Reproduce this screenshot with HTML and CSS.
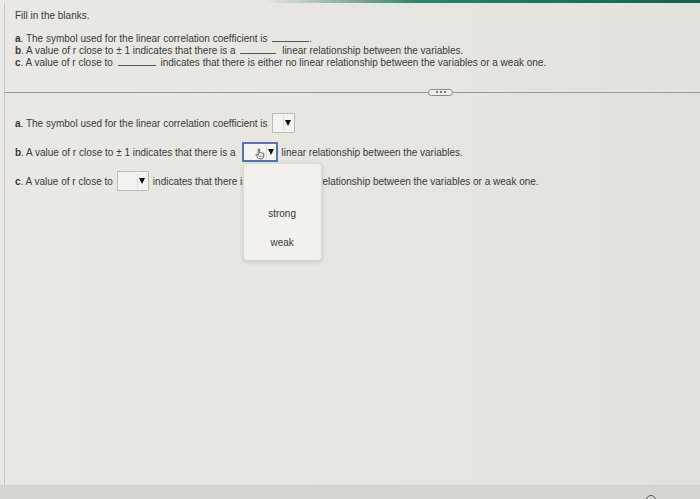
FILE: index.html
```html
<!DOCTYPE html>
<html lang="en">
<head>
    <meta charset="UTF-8">
    <title>Fill in the blanks</title>
    <meta name="viewport" content="width=device-width, initial-scale=1.0">
    <link rel="stylesheet" href="styles.css">
</head>
<body>
    <div class="screen">
        <div class="topbar"></div>

        <div class="frame">
            <!-- question text -->
            <div class="intro">
                <p class="title">Fill in the blanks.</p>
                <div class="questions">
                    <p><b>a</b>. The symbol used for the linear correlation coefficient is <span class="blank blank-a"></span>.</p>
                    <p><b>b</b>. A value of r close to &plusmn; 1 indicates that there is a <span class="blank blank-b"></span> linear relationship between the variables.</p>
                    <p><b>c</b>. A value of r close to <span class="blank blank-c"></span> indicates that there is either no linear relationship between the variables or a weak one.</p>
                </div>
            </div>

            <div class="divider">
                <span class="rule rule-left"></span>
                <span class="more"><i></i><i></i><i></i></span>
                <span class="rule"></span>
            </div>

            <!-- answer area -->
            <div class="answers">
                <div class="answer-row">
                    <span><b>a</b>. The symbol used for the linear correlation coefficient is</span>
                    <span class="select select-a"><span class="arrow"></span></span>
                </div>
                <div class="answer-row">
                    <span><b>b</b>. A value of r close to &plusmn; 1 indicates that there is a</span>
                    <span class="select-wrap">
                        <span class="select select-b focused">
                            <svg class="hand" viewBox="0 0 14 16" width="10" height="12">
                                <path d="M4.5 1.8a1 1 0 0 1 2 0V6.5h.4a1 1 0 0 1 1.8.3 1 1 0 0 1 1.8.4 1 1 0 0 1 1.8.6V11c0 2.2-1.6 3.8-3.8 3.8H6.7c-1.3 0-2.1-.6-2.9-1.700L1.6 9.8a1 1 0 0 1 1.6-1.2l1.3 1.5z" fill="#fff" stroke="#222" stroke-width="1"/>
                                <path d="M6.5 10v2.5M8.3 10v2.5M10.1 10v2.5" stroke="#222" stroke-width=".7"/>
                            </svg>
                            <span class="arrow"></span>
                        </span>
                        <div class="menu">
                            <div class="menu-item">strong</div>
                            <div class="menu-item">weak</div>
                        </div>
                    </span>
                    <span class="after">linear relationship between the variables.</span>
                </div>
                <div class="answer-row">
                    <span><b>c</b>. A value of r close to</span>
                    <span class="select select-c"><span class="arrow"></span></span>
                    <span class="after">indicates that there is either no linear relationship between the variables or a weak one.</span>
                </div>
            </div>
        </div>

        <div class="footer">
            <span class="dot"></span>
        </div>
    </div>
</body>
</html>
```

FILE: styles.css
```css
* {
    box-sizing: border-box;
    margin: 0;
    padding: 0;
}
body {
    font-family: "Liberation Sans", Arial, sans-serif;
    font-size: 10px;
    color: #3a3a3a;
    background-color: #e8e7e2;
}
.screen {
    height: 499px;
    display: flex;
    flex-direction: column;
    background: linear-gradient(to right, #e9e8e4, #e6e5df 60%, #e2e1db);
}
.topbar {
    height: 3px;
    background: linear-gradient(to right, rgba(40, 100, 80, 0) 38%, #3a7a66 60%, #1f5c4c);
}
.frame {
    flex: 1;
    margin-left: 4px;
    border-left: 1px solid #c8c6c1;
}
.intro {
    padding: 7px 0 0 10px;
}
.title {
    line-height: 12px;
}
.questions {
    margin-top: 11px;
}
.questions p {
    line-height: 12px;
    white-space: nowrap;
}
.blank {
    display: inline-block;
    height: 9px;
    border-bottom: 1px solid #555;
    vertical-align: baseline;
}
.blank-a {
    width: 37px;
    margin-left: 2px;
}
.blank-b {
    width: 36px;
    margin: 0 3px 0 2px;
}
.blank-c {
    width: 38px;
    margin: 0 2px;
}
.divider {
    display: flex;
    align-items: center;
    height: 8px;
    margin-top: 19px;
}
.rule {
    flex: 1;
    height: 1px;
    background: #9a9996;
}
.rule-left {
    flex: none;
    width: 423px;
}
.more {
    display: flex;
    align-items: center;
    justify-content: center;
    gap: 2px;
    width: 25px;
    height: 7px;
    border: 1px solid #8a8986;
    border-radius: 4px;
    background: #efeeea;
}
.more i {
    width: 2px;
    height: 2px;
    background: #777;
}
.answers {
    margin-top: 17px;
    padding-left: 10px;
    display: flex;
    flex-direction: column;
    gap: 9px;
}
.answer-row {
    display: flex;
    align-items: center;
    height: 20px;
    white-space: nowrap;
}
.select {
    display: flex;
    align-items: center;
    justify-content: flex-end;
    height: 20px;
    margin-left: 4px;
    padding-right: 2px;
    border: 1px solid #bdbcb8;
    background: #f3f3f1;
}
.select-a {
    width: 23px;
}
.select-b {
    width: 36px;
    margin-left: 6px;
    gap: 1px;
}
.select-c {
    width: 32px;
}
.select.focused {
    border: 2px solid #5873aa;
    padding-right: 1px;
}
.arrow {
    display: flex;
    align-items: center;
    justify-content: center;
    width: 9px;
    height: 14px;
    border-left: 1px solid #dcdbd8;
}
.arrow::after {
    content: "";
    border-left: 3.5px solid transparent;
    border-right: 3.5px solid transparent;
    border-top: 6px solid #111;
}
.hand {
    margin-top: 3px;
}
.select-wrap {
    position: relative;
}
/* open dropdown for part b */
.menu {
    position: absolute;
    top: 21px;
    left: 7px;
    width: 79px;
    height: 98px;
    padding-top: 43px;
    background: #f2f1ee;
    border: 1px solid #dad9d5;
    border-radius: 4px;
    box-shadow: 0 1px 4px rgba(0, 0, 0, 0.15);
    z-index: 2;
}
.menu-item {
    text-align: center;
    line-height: 14px;
    margin-bottom: 15px;
}
.after {
    margin-left: 4px;
}
.footer {
    display: flex;
    justify-content: flex-end;
    align-items: flex-end;
    height: 14px;
    padding-right: 44px;
    background: #d8d6d0;
    border-top: 1px solid #cfcdc7;
    overflow: hidden;
}
.dot {
    width: 10px;
    height: 10px;
    margin-bottom: -6px;
    border: 1.5px solid #555;
    border-radius: 50%;
}
```
